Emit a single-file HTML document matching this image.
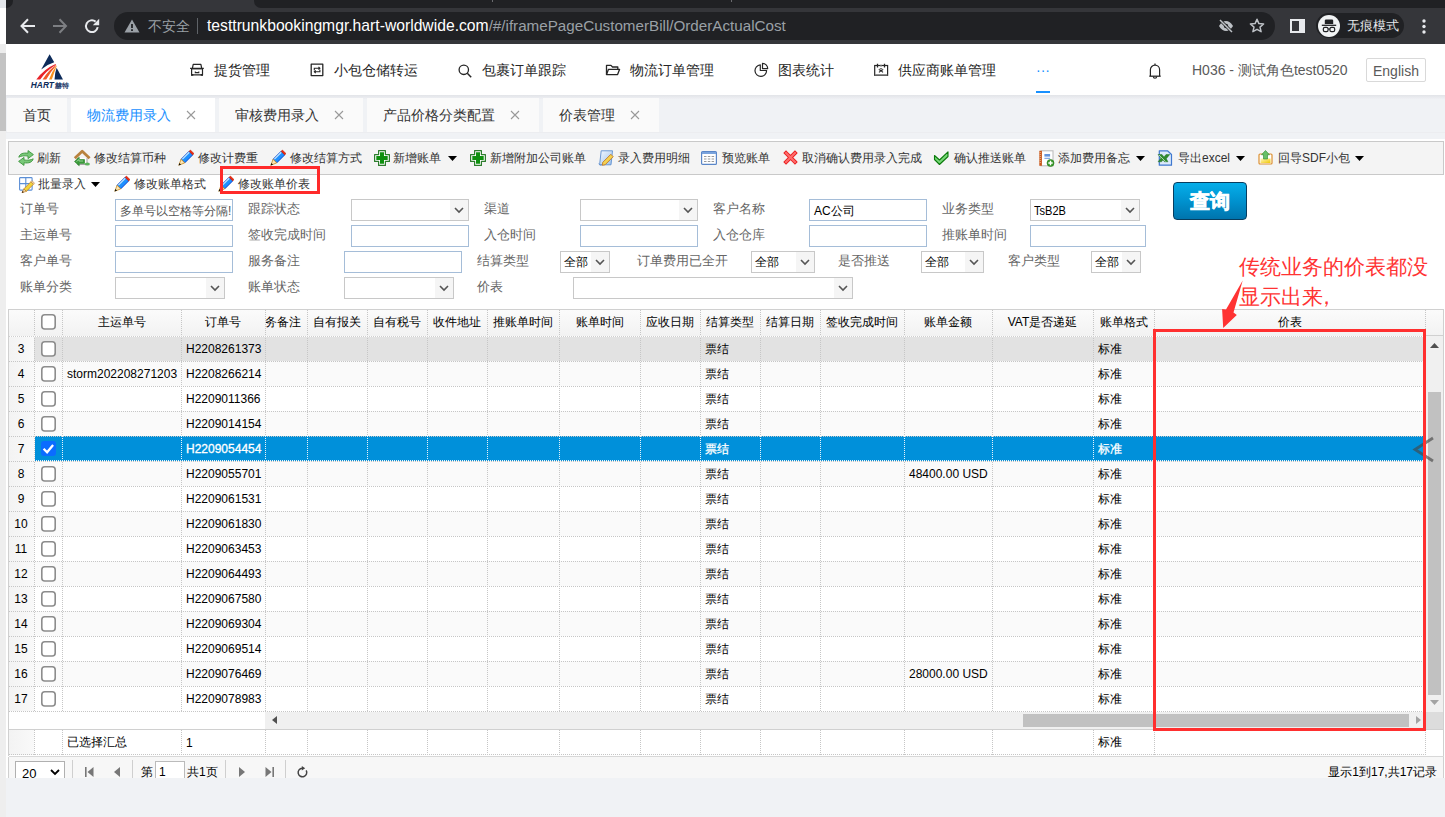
<!DOCTYPE html><html><head><meta charset="utf-8"><style>
*{box-sizing:border-box;margin:0;padding:0}
html,body{width:1445px;height:817px;overflow:hidden;background:#f0f2f5;font-family:"Liberation Sans",sans-serif;position:relative}
.ab{position:absolute}
.t{position:absolute;white-space:nowrap;line-height:1}
svg{position:absolute;overflow:visible}
</style></head><body>
<div class="ab" style="left:0px;top:0px;width:6px;height:8px;background:#e4e7eb"></div>
<div class="ab" style="left:0px;top:8px;width:6px;height:36px;background:#fff"></div>
<div class="ab" style="left:0px;top:44px;width:6px;height:9px;background:#ececec"></div>
<div class="ab" style="left:0px;top:53px;width:6px;height:78px;background:#c3c3c3"></div>
<div class="ab" style="left:0px;top:131px;width:6px;height:686px;background:#eeeeee"></div>
<div class="ab" style="left:6px;top:0px;width:1439px;height:44px;background:#35363a"></div>
<div class="ab" style="left:6px;top:0px;width:7px;height:8px;background:#202124;border-bottom-right-radius:7px"></div>
<div class="ab" style="left:254px;top:0px;width:1191px;height:8px;background:#202124;border-bottom-left-radius:7px"></div>
<div class="ab" style="left:114px;top:12px;width:1161px;height:28px;background:#202124;border-radius:14px"></div>
<div class="ab" style="left:492px;top:0px;width:1px;height:2px;background:#6a6b6f"></div>
<div class="ab" style="left:731px;top:0px;width:1px;height:2px;background:#6a6b6f"></div>
<svg style="left:20px;top:18px" width="16" height="16" viewBox="0 0 16 16"><path d="M15 8H2M8 1.3L1.5 8l6.5 6.7" fill="none" stroke="#e8eaed" stroke-width="2"/></svg>
<svg style="left:53px;top:18px" width="15" height="16" viewBox="0 0 15 16"><path d="M0 8H13M6.5 1.3L13 8l-6.5 6.7" fill="none" stroke="#7d7f83" stroke-width="2"/></svg>
<svg style="left:84px;top:18px" width="16" height="16" viewBox="0 0 16 16"><path d="M11.6 3.6A5.9 5.9 0 1 0 13.7 9.2" fill="none" stroke="#e8eaed" stroke-width="2"/><path d="M8.8 7.2H15.2V0.8z" fill="#e8eaed"/></svg>
<svg style="left:124px;top:19px" width="16" height="14" viewBox="0 0 16 14"><path d="M8 0.5L15.5 13.5H0.5z" fill="#9aa0a6"/><rect x="7.1" y="5" width="1.8" height="4" fill="#202124"/><rect x="7.1" y="10.2" width="1.8" height="1.8" fill="#202124"/></svg>
<div class="t" style="left:148px;top:19px;font-size:14px;color:#9aa0a6;">不安全</div>
<div class="ab" style="left:197px;top:18px;width:1px;height:16px;background:#5f6368"></div>
<div class="t" style="left:207px;top:18px;font-size:15.2px;color:#9aa0a6;"><span style="color:#ffffff;font-size:15.7px">testtrunkbookingmgr.hart-worldwide.com</span>/#/iframePageCustomerBill/OrderActualCost</div>
<svg style="left:1218px;top:19px" width="16" height="14" viewBox="0 0 16 14"><path d="M1 7C3 3.5 5.5 2 8 2s5 1.5 7 5c-2 3.5-4.5 5-7 5S3 10.5 1 7z" fill="#bdc1c6"/><circle cx="8" cy="7" r="2.2" fill="#202124"/><path d="M2 1l12 12" stroke="#202124" stroke-width="3"/><path d="M2 1l12 12" stroke="#bdc1c6" stroke-width="1.5"/></svg>
<svg style="left:1249px;top:18px" width="16" height="16" viewBox="0 0 16 16"><path d="M8 1.3l1.9 4.3 4.7.4-3.6 3.1 1.1 4.6L8 11.3l-4.1 2.4 1.1-4.6L1.4 6l4.7-.4z" fill="none" stroke="#bdc1c6" stroke-width="1.5" stroke-linejoin="round"/></svg>
<svg style="left:1290px;top:19px" width="15" height="14" viewBox="0 0 15 14"><rect x="1" y="1" width="13" height="12" fill="none" stroke="#e8eaed" stroke-width="2"/><rect x="9" y="1" width="5" height="12" fill="#e8eaed"/></svg>
<div class="ab" style="left:1316px;top:13px;width:88px;height:25px;background:#202124;border-radius:12.5px"></div>
<div class="ab" style="left:1318px;top:15px;width:22px;height:22px;border-radius:50%;background:#f1f3f4"></div>
<svg style="left:1318px;top:15px" width="22" height="22" viewBox="0 0 22 22"><path d="M6.8 9V5.8Q6.8 4.6 8 4.6H14Q15.2 4.6 15.2 5.8V9z" fill="#202124"/><path d="M3.8 10.3H18.2" stroke="#202124" stroke-width="1.3"/><rect x="5.3" y="12.3" width="4.8" height="4.3" rx="1.6" fill="none" stroke="#202124" stroke-width="1.2"/><rect x="11.9" y="12.3" width="4.8" height="4.3" rx="1.6" fill="none" stroke="#202124" stroke-width="1.2"/><path d="M10.1 14h1.8" stroke="#202124" stroke-width="1.1"/></svg>
<div class="t" style="left:1347px;top:19px;font-size:13px;color:#e8eaed;">无痕模式</div>
<svg style="left:1422px;top:19px" width="4" height="15" viewBox="0 0 4 15"><circle cx="2" cy="2" r="1.7" fill="#e8eaed"/><circle cx="2" cy="7.5" r="1.7" fill="#e8eaed"/><circle cx="2" cy="13" r="1.7" fill="#e8eaed"/></svg>
<div class="ab" style="left:6px;top:44px;width:1439px;height:51px;background:#fff"></div>
<svg style="left:28px;top:52px" width="44" height="40" viewBox="0 0 44 40">
<path d="M21.6 2.2L13.2 17.5Q19 12.5 26.2 10.3Z" fill="#0d2b5a"/>
<path d="M28.6 15.7L35 27.5H26.5Q26.8 21 28.6 15.7Z" fill="#0d2b5a"/>
<path d="M8.3 27.5Q16 17 27.5 12L28 12.8Q18 19 12.2 27.5Z" fill="#e8242a"/>
<path d="M14.6 27.5Q20 18.5 28 12.9L28.3 13.6Q22.5 20 18.2 27.5Z" fill="#f05a28"/>
<path d="M21 27.5Q23.5 20 28.3 13.7L28.6 14.3Q26 21 23.8 27.5Z" fill="#f7901e"/>
<text x="2.8" y="36.3" font-family="Liberation Sans" font-weight="bold" font-style="italic" font-size="8.4" fill="#0d2b5a">HART</text>
<text x="26.6" y="36.2" font-family="sans-serif" font-weight="bold" font-size="6.8" fill="#1d3b6a">赫特</text>
</svg>
<div class="t" style="left:214px;top:63px;font-size:14px;color:#262626;">提货管理</div>
<div class="t" style="left:334px;top:63px;font-size:14px;color:#262626;">小包仓储转运</div>
<div class="t" style="left:482px;top:63px;font-size:14px;color:#262626;">包裹订单跟踪</div>
<div class="t" style="left:630px;top:63px;font-size:14px;color:#262626;">物流订单管理</div>
<div class="t" style="left:778px;top:63px;font-size:14px;color:#262626;">图表统计</div>
<div class="t" style="left:898px;top:63px;font-size:14px;color:#262626;">供应商账单管理</div>
<svg style="left:189px;top:62px" width="16" height="16" viewBox="0 0 16 16"><rect x="3" y="6.4" width="10" height="1.4" fill="#8a8a8a"/><path d="M3.4 6.4L4.2 2.4H11.9L12.7 6.4M1.1 6.4H14.8M2.6 6.4V12.9H13.5V6.4" fill="none" stroke="#262626" stroke-width="1.2" stroke-linejoin="round"/><path d="M6.3 9.4V10.6H9.8V9.4" fill="none" stroke="#262626" stroke-width="1.1"/><path d="M2 12.9h2.3M11.7 12.9h2.3" stroke="#262626" stroke-width="1.8"/></svg>
<svg style="left:310px;top:63px" width="14" height="14" viewBox="0 0 14 14"><rect x="1.2" y="1.2" width="11.6" height="11.4" fill="none" stroke="#262626" stroke-width="1.3" stroke-linejoin="round"/><path d="M4.3 7.2V5.2H9.6M8.5 3.8L9.9 5.2 8.5 6.6M9.9 6.8V8.8H4.6M5.7 7.4L4.3 8.8 5.7 10.2" fill="none" stroke="#262626" stroke-width="1.1"/></svg>
<svg style="left:605px;top:64px" width="16" height="12" viewBox="0 0 16 12"><path d="M1.5 10.6V1.4H6L7.5 3H12.8V5.3" fill="none" stroke="#262626" stroke-width="1.3" stroke-linejoin="round"/><path d="M1.5 10.6L3.5 5.3H14.6L12.6 10.6Z" fill="none" stroke="#262626" stroke-width="1.3" stroke-linejoin="round"/></svg>
<svg style="left:754px;top:63px" width="15" height="15" viewBox="0 0 15 15"><path d="M6.3 1.8A5.8 5.8 0 1 0 12.6 7.5H6.3z" fill="none" stroke="#262626" stroke-width="1.2" stroke-linejoin="round"/><path d="M8.5 0.3V5.6H13.7A5.3 5.3 0 0 0 8.5 0.3z" fill="none" stroke="#262626" stroke-width="1.2" stroke-linejoin="round"/></svg>
<svg style="left:874px;top:63px" width="14" height="14" viewBox="0 0 14 14"><rect x="0.7" y="2.5" width="12.9" height="9.8" fill="none" stroke="#262626" stroke-width="1.2"/><rect x="1" y="11.2" width="12.3" height="1.3" fill="#888"/><path d="M3.5 0.8V4.6M10.5 0.8V4.6" stroke="#262626" stroke-width="1.3"/><path d="M7 1.5V4" stroke="#999" stroke-width="1.1"/><ellipse cx="7" cy="6.7" rx="1.8" ry="0.9" fill="none" stroke="#262626" stroke-width="1"/><path d="M5 9.3L7 7.6 9 9.3" fill="none" stroke="#262626" stroke-width="1.1"/></svg>
<svg style="left:458px;top:64px" width="14" height="14" viewBox="0 0 14 14"><circle cx="5.8" cy="5.8" r="4.7" fill="none" stroke="#262626" stroke-width="1.3"/><path d="M9.3 9.3l3.9 3.9" stroke="#262626" stroke-width="1.5"/></svg>
<div class="t" style="left:1036px;top:63px;font-size:14px;color:#1890ff;">···</div>
<div class="ab" style="left:1036px;top:91px;width:14px;height:2px;background:#1890ff"></div>
<svg style="left:1149px;top:63px" width="12" height="16" viewBox="0 0 12 16"><path d="M1.4 13V6.8A4.6 4.6 0 0 1 10.6 6.8V13" fill="none" stroke="#262626" stroke-width="1.2"/><path d="M0.3 13.2H11.7" stroke="#262626" stroke-width="1.3"/><path d="M4.3 13.6A1.7 1.7 0 0 0 7.7 13.6" fill="none" stroke="#262626" stroke-width="1.1"/><path d="M6 0.5V2" stroke="#262626" stroke-width="1.2"/></svg>
<div class="t" style="left:1192px;top:63px;font-size:14px;color:#5a5a5a;">H036 - 测试角色test0520</div>
<div class="ab" style="left:1366px;top:58px;width:60px;height:24px;border:1px solid #d9d9d9;border-radius:2px;background:#fff"></div>
<div class="t" style="left:1373px;top:64px;font-size:14px;color:#5a5a5a;">English</div>
<div class="ab" style="left:6px;top:95px;width:1439px;height:4px;background:linear-gradient(#e2e4e8,#eff0f4)"></div>
<div class="ab" style="left:6px;top:132px;width:1439px;height:1px;background:#ecedf0"></div>
<div class="ab" style="left:7px;top:98px;width:60px;height:34px;background:#fafafa"></div>
<div class="t" style="left:23px;top:108px;font-size:14px;color:#333;">首页</div>
<div class="ab" style="left:71px;top:98px;width:144px;height:34px;background:#fff"></div>
<div class="t" style="left:87px;top:108px;font-size:14px;color:#1890ff;">物流费用录入</div>
<svg style="left:186px;top:110px" width="10" height="10" viewBox="0 0 10 10"><path d="M1 1l8 8M9 1l-8 8" stroke="#999" stroke-width="1.1"/></svg>
<div class="ab" style="left:219px;top:98px;width:144px;height:34px;background:#fafafa"></div>
<div class="t" style="left:235px;top:108px;font-size:14px;color:#333;">审核费用录入</div>
<svg style="left:334px;top:110px" width="10" height="10" viewBox="0 0 10 10"><path d="M1 1l8 8M9 1l-8 8" stroke="#999" stroke-width="1.1"/></svg>
<div class="ab" style="left:367px;top:98px;width:172px;height:34px;background:#fafafa"></div>
<div class="t" style="left:383px;top:108px;font-size:14px;color:#333;">产品价格分类配置</div>
<svg style="left:510px;top:110px" width="10" height="10" viewBox="0 0 10 10"><path d="M1 1l8 8M9 1l-8 8" stroke="#999" stroke-width="1.1"/></svg>
<div class="ab" style="left:543px;top:98px;width:116px;height:34px;background:#fafafa"></div>
<div class="t" style="left:559px;top:108px;font-size:14px;color:#333;">价表管理</div>
<svg style="left:630px;top:110px" width="10" height="10" viewBox="0 0 10 10"><path d="M1 1l8 8M9 1l-8 8" stroke="#999" stroke-width="1.1"/></svg>
<div class="ab" style="left:6px;top:139px;width:1439px;height:639px;background:#fff"></div>
<div class="ab" style="left:8px;top:141px;width:1436px;height:34px;background:#f4f4f4;border:1px solid #c9c9c9"></div>
<svg style="left:18px;top:150px" width="16" height="16" viewBox="0 0 16 16"><path d="M0.8 7.2C1.8 3.6 5 2.6 10 3.2V0.6L15.4 4.6 10 8.6V6C6 5.6 3.4 5.8 0.8 7.2z" fill="#78c878" stroke="#3d953d" stroke-width="0.9" stroke-linejoin="round"/><path d="M15.2 8.8C14.2 12.4 11 13.4 6 12.8V15.4L0.6 11.4 6 7.4V10C10 10.4 12.6 10.2 15.2 8.8z" fill="#78c878" stroke="#3d953d" stroke-width="0.9" stroke-linejoin="round"/></svg>
<div class="t" style="left:37px;top:152px;font-size:12px;color:#333;">刷新</div>
<svg style="left:74px;top:150px" width="16" height="16" viewBox="0 0 16 16"><path d="M3.5 8V14.5H13V8" fill="#fff" stroke="#9a9a9a" stroke-width="0.9"/><path d="M0.8 8.2L8.2 1.2 15.6 8.2" fill="none" stroke="#b8823e" stroke-width="2.8" stroke-linejoin="round"/><ellipse cx="13.3" cy="14" rx="2.6" ry="1.5" fill="#5bb35b"/><path d="M0.5 11.5L5.2 7.2V9.6H10.5V13.4H5.2V15.8z" fill="#3c9c3c" stroke="#1e7a1e" stroke-width="0.6"/><path d="M2.5 11.5L5 9.5V11H9" fill="none" stroke="#a9dca9" stroke-width="0.8"/></svg>
<div class="t" style="left:94px;top:152px;font-size:12px;color:#333;">修改结算币种</div>
<svg style="left:178px;top:150px" width="16" height="16" viewBox="0 0 16 16"><path d="M3.1 9.3L11.1 1.3 14.7 4.9 6.7 12.9z" fill="#1e90ff" stroke="#0a3cc8" stroke-width="0.9" stroke-linejoin="round"/><path d="M4.4 9.1L11.3 2.2" stroke="#bfe6ff" stroke-width="1.3"/><path d="M11.1 1.3L12.4 0 16 3.6 14.7 4.9z" fill="#ee2a10" stroke="#b81a00" stroke-width="0.5"/><path d="M3.1 9.3L6.7 12.9 0.8 15.2z" fill="#fbe7b8" stroke="#c88a1a" stroke-width="0.8" stroke-linejoin="round"/><path d="M0.6 15.4L1.4 12.9 3.1 14.6z" fill="#111"/></svg>
<div class="t" style="left:198px;top:152px;font-size:12px;color:#333;">修改计费重</div>
<svg style="left:270px;top:150px" width="16" height="16" viewBox="0 0 16 16"><path d="M3.1 9.3L11.1 1.3 14.7 4.9 6.7 12.9z" fill="#1e90ff" stroke="#0a3cc8" stroke-width="0.9" stroke-linejoin="round"/><path d="M4.4 9.1L11.3 2.2" stroke="#bfe6ff" stroke-width="1.3"/><path d="M11.1 1.3L12.4 0 16 3.6 14.7 4.9z" fill="#ee2a10" stroke="#b81a00" stroke-width="0.5"/><path d="M3.1 9.3L6.7 12.9 0.8 15.2z" fill="#fbe7b8" stroke="#c88a1a" stroke-width="0.8" stroke-linejoin="round"/><path d="M0.6 15.4L1.4 12.9 3.1 14.6z" fill="#111"/></svg>
<div class="t" style="left:290px;top:152px;font-size:12px;color:#333;">修改结算方式</div>
<svg style="left:374px;top:150px" width="16" height="16" viewBox="0 0 16 16"><path d="M4.6 0.6h6.8v4h4v6.8h-4v4H4.6v-4h-4V4.6h4z" fill="#fff" stroke="#2d7d2d" stroke-width="1.2" stroke-linejoin="round"/><path d="M6 2.3h4v3.7h3.7v4H10v3.7H6V10H2.3V6H6z" fill="#0e900e"/></svg>
<div class="t" style="left:393px;top:152px;font-size:12px;color:#333;">新增账单</div>
<svg style="left:448px;top:156px" width="9" height="5" viewBox="0 0 9 5"><path d="M0 0h9L4.5 5z" fill="#000"/></svg>
<svg style="left:470px;top:150px" width="16" height="16" viewBox="0 0 16 16"><path d="M4.6 0.6h6.8v4h4v6.8h-4v4H4.6v-4h-4V4.6h4z" fill="#fff" stroke="#2d7d2d" stroke-width="1.2" stroke-linejoin="round"/><path d="M6 2.3h4v3.7h3.7v4H10v3.7H6V10H2.3V6H6z" fill="#0e900e"/></svg>
<div class="t" style="left:490px;top:152px;font-size:12px;color:#333;">新增附加公司账单</div>
<svg style="left:598px;top:150px" width="16" height="16" viewBox="0 0 16 16"><defs><linearGradient id="gdoc" x1="0" y1="0" x2="1" y2="1"><stop offset="0" stop-color="#f4f9ff"/><stop offset="1" stop-color="#9cc0ea"/></linearGradient></defs><path d="M3.2 0.8H14.5L13 14.8H1.6z" fill="url(#gdoc)" stroke="#5d8fcf" stroke-width="0.9" stroke-linejoin="round"/><path d="M0.8 13.5c0.5 1.6 1.8 1.8 3 1.3" fill="none" stroke="#5d8fcf" stroke-width="0.9"/><path d="M4.8 12.3L12.8 4.3 15.2 6.7 7.2 14.7 4.3 15.3z" fill="#f5d250" stroke="#c07a2a" stroke-width="0.9" stroke-linejoin="round"/></svg>
<div class="t" style="left:618px;top:152px;font-size:12px;color:#333;">录入费用明细</div>
<svg style="left:701px;top:151px" width="16" height="14" viewBox="0 0 16 14"><rect x="0.6" y="0.6" width="14.8" height="12.8" rx="1" fill="#fff" stroke="#5a86c8" stroke-width="1.2"/><rect x="1" y="1" width="14" height="2" fill="#7aa3dc"/><path d="M3 5.5h2.5M6.8 5.5h2.5M10.6 5.5h2.5M3 8h2.5M6.8 8h2.5M10.6 8h2.5M3 10.5h2.5M6.8 10.5h2.5M10.6 10.5h2.5" stroke="#9a9a9a" stroke-width="1"/></svg>
<div class="t" style="left:722px;top:152px;font-size:12px;color:#333;">预览账单</div>
<svg style="left:784px;top:151px" width="13" height="13" viewBox="0 0 14 14"><path d="M2.2 2.2l9.6 9.6M11.8 2.2l-9.6 9.6" stroke="#e81c1c" stroke-width="4.2" stroke-linecap="square"/><path d="M2.2 2.2l9.6 9.6M11.8 2.2l-9.6 9.6" stroke="#ff6b6b" stroke-width="2.4" stroke-linecap="square"/></svg>
<div class="t" style="left:802px;top:152px;font-size:12px;color:#333;">取消确认费用录入完成</div>
<svg style="left:934px;top:151px" width="16" height="14" viewBox="0 0 16 14"><path d="M0.5 4.5L5.5 9 14 0.8V5.5L5.5 13.5 0.5 8.5z" fill="#78d878" stroke="#0a7a0a" stroke-width="1.1" stroke-linejoin="round"/></svg>
<div class="t" style="left:954px;top:152px;font-size:12px;color:#333;">确认推送账单</div>
<svg style="left:1039px;top:150px" width="16" height="17" viewBox="0 0 16 17"><rect x="2" y="0.8" width="12" height="15" fill="#fff" stroke="#bdbdbd" stroke-width="1.1"/><path d="M1.6 0.8V15.8" stroke="#c9571a" stroke-width="2.6"/><path d="M0.5 2.5h1.5M0.5 4.5h1.5M0.5 6.5h1.5M0.5 8.5h1.5M0.5 10.5h1.5M0.5 12.5h1.5" stroke="#e8b48a" stroke-width="0.8"/><rect x="5.4" y="4" width="5.7" height="2.6" fill="#6595dc"/><rect x="5.4" y="7.8" width="5.7" height="1" fill="#6595dc"/><circle cx="11.5" cy="13" r="3.5" fill="#3a9a2a" stroke="#237a1a" stroke-width="0.6"/><path d="M11.5 10.8v4.4M9.3 13h4.4" stroke="#fff" stroke-width="1.4"/></svg>
<div class="t" style="left:1058px;top:152px;font-size:12px;color:#333;">添加费用备忘</div>
<svg style="left:1136px;top:156px" width="9" height="5" viewBox="0 0 9 5"><path d="M0 0h9L4.5 5z" fill="#000"/></svg>
<svg style="left:1157px;top:150px" width="16" height="16" viewBox="0 0 16 16"><path d="M2.3 0.8H10.5L14.5 4.5V15.2H2.3z" fill="#dbe9fb" stroke="#3f78d0" stroke-width="1.2" stroke-linejoin="round"/><path d="M1 4.5h4l2 2.5 2-2.5h3.8L9.3 8.8 11 11.8H7.5L6 10 4.5 11.8H1L4 8z" fill="#2f8a2f" stroke="#1d6a1d" stroke-width="0.4"/><path d="M2 5L8.5 11.5" stroke="#c8f0c8" stroke-width="0.8"/></svg>
<div class="t" style="left:1178px;top:152px;font-size:12px;color:#333;">导出excel</div>
<svg style="left:1236px;top:156px" width="9" height="5" viewBox="0 0 9 5"><path d="M0 0h9L4.5 5z" fill="#000"/></svg>
<svg style="left:1258px;top:150px" width="15" height="15" viewBox="0 0 15 15"><defs><linearGradient id="gup" x1="0" y1="0" x2="1" y2="1"><stop offset="0" stop-color="#fff5c0"/><stop offset="1" stop-color="#f0c800"/></linearGradient></defs><rect x="1" y="4" width="13" height="10" rx="1" fill="#fff" stroke="#dc9030" stroke-width="1.2"/><rect x="2.5" y="8.5" width="10" height="4.5" fill="url(#gup)"/><path d="M7.5 0.5L11.5 4.8H9.5V9H5.5V4.8H3.5z" fill="#68c068" stroke="#2e8a2e" stroke-width="0.6"/></svg>
<div class="t" style="left:1278px;top:152px;font-size:12px;color:#333;">回导SDF小包</div>
<svg style="left:1355px;top:156px" width="9" height="5" viewBox="0 0 9 5"><path d="M0 0h9L4.5 5z" fill="#000"/></svg>
<svg style="left:19px;top:177px" width="16" height="16" viewBox="0 0 16 16"><rect x="0.6" y="0.6" width="12.5" height="12.5" rx="0.8" fill="#fff" stroke="#5b8fd6" stroke-width="1.1"/><path d="M6.8 1v11.5M1 6.6h11.5" stroke="#5b8fd6" stroke-width="1.1"/><path d="M4.8 11.9L11.9 4.8 14.4 7.3 7.3 14.4z" fill="#f3d43a" stroke="#c07e22" stroke-width="0.8" stroke-linejoin="round"/><path d="M12 4.7l1-1 2.5 2.5-1 1z" fill="#f8e0c0" stroke="#c07e22" stroke-width="0.6"/><path d="M4.8 11.9L7.3 14.4 3 15.7z" fill="#f5d8a8" stroke="#b5751c" stroke-width="0.6" stroke-linejoin="round"/><path d="M2.8 15.9L3.5 13.8 4.9 15.2z" fill="#4a2a0a"/></svg>
<div class="t" style="left:38px;top:178px;font-size:12px;color:#333;">批量录入</div>
<svg style="left:91px;top:182px" width="9" height="5" viewBox="0 0 9 5"><path d="M0 0h9L4.5 5z" fill="#000"/></svg>
<svg style="left:114px;top:176px" width="16" height="16" viewBox="0 0 16 16"><path d="M3.1 9.3L11.1 1.3 14.7 4.9 6.7 12.9z" fill="#1e90ff" stroke="#0a3cc8" stroke-width="0.9" stroke-linejoin="round"/><path d="M4.4 9.1L11.3 2.2" stroke="#bfe6ff" stroke-width="1.3"/><path d="M11.1 1.3L12.4 0 16 3.6 14.7 4.9z" fill="#ee2a10" stroke="#b81a00" stroke-width="0.5"/><path d="M3.1 9.3L6.7 12.9 0.8 15.2z" fill="#fbe7b8" stroke="#c88a1a" stroke-width="0.8" stroke-linejoin="round"/><path d="M0.6 15.4L1.4 12.9 3.1 14.6z" fill="#111"/></svg>
<div class="t" style="left:134px;top:178px;font-size:12px;color:#333;">修改账单格式</div>
<svg style="left:218px;top:176px" width="16" height="16" viewBox="0 0 16 16"><path d="M3.1 9.3L11.1 1.3 14.7 4.9 6.7 12.9z" fill="#1e90ff" stroke="#0a3cc8" stroke-width="0.9" stroke-linejoin="round"/><path d="M4.4 9.1L11.3 2.2" stroke="#bfe6ff" stroke-width="1.3"/><path d="M11.1 1.3L12.4 0 16 3.6 14.7 4.9z" fill="#ee2a10" stroke="#b81a00" stroke-width="0.5"/><path d="M3.1 9.3L6.7 12.9 0.8 15.2z" fill="#fbe7b8" stroke="#c88a1a" stroke-width="0.8" stroke-linejoin="round"/><path d="M0.6 15.4L1.4 12.9 3.1 14.6z" fill="#111"/></svg>
<div class="t" style="left:238px;top:178px;font-size:12px;color:#333;">修改账单价表</div>
<div class="t" style="left:20px;top:202px;font-size:13px;color:#666;">订单号</div>
<div class="ab" style="left:115px;top:199px;width:118px;height:22px;border:1px solid #a5bdd8;background:#fff;overflow:hidden"><div class="t" style="left:4px;top:5px;font-size:12px;color:#555">多单号以空格等分隔!</div></div>
<div class="t" style="left:248px;top:202px;font-size:13px;color:#666;">跟踪状态</div>
<div class="ab" style="left:351px;top:199px;width:118px;height:22px;border:1px solid #c8c8c8;background:#fff;overflow:hidden"><div class="t" style="left:3px;top:4px;font-size:12px;color:#000;"></div><div class="ab" style="right:0;top:0;width:18px;height:20px;background:#f5f5f5"></div><svg style="right:4px;top:7px" width="10" height="6" viewBox="0 0 10 6"><path d="M1 1l4 4 4-4" fill="none" stroke="#555" stroke-width="1.6"/></svg></div>
<div class="t" style="left:484px;top:202px;font-size:13px;color:#666;">渠道</div>
<div class="ab" style="left:580px;top:199px;width:118px;height:22px;border:1px solid #c8c8c8;background:#fff;overflow:hidden"><div class="t" style="left:3px;top:4px;font-size:12px;color:#000;"></div><div class="ab" style="right:0;top:0;width:18px;height:20px;background:#f5f5f5"></div><svg style="right:4px;top:7px" width="10" height="6" viewBox="0 0 10 6"><path d="M1 1l4 4 4-4" fill="none" stroke="#555" stroke-width="1.6"/></svg></div>
<div class="t" style="left:713px;top:202px;font-size:13px;color:#666;">客户名称</div>
<div class="ab" style="left:809px;top:199px;width:118px;height:22px;border:1px solid #a5bdd8;background:#fff;overflow:hidden"><div class="t" style="left:4px;top:5px;font-size:12px;color:#000">AC公司</div></div>
<div class="t" style="left:942px;top:202px;font-size:13px;color:#666;">业务类型</div>
<div class="ab" style="left:1030px;top:199px;width:110px;height:22px;border:1px solid #c8c8c8;background:#fff;overflow:hidden"><div class="t" style="left:3px;top:4.5px;font-size:12px;color:#000;transform:scaleX(0.92);transform-origin:0 0">TsB2B</div><div class="ab" style="right:0;top:0;width:18px;height:20px;background:#f5f5f5"></div><svg style="right:4px;top:7px" width="10" height="6" viewBox="0 0 10 6"><path d="M1 1l4 4 4-4" fill="none" stroke="#555" stroke-width="1.6"/></svg></div>
<div class="t" style="left:20px;top:228px;font-size:13px;color:#666;">主运单号</div>
<div class="ab" style="left:115px;top:225px;width:118px;height:22px;border:1px solid #a5bdd8;background:#fff;overflow:hidden"><div class="t" style="left:4px;top:5px;font-size:13px;color:#000"></div></div>
<div class="t" style="left:248px;top:228px;font-size:13px;color:#666;">签收完成时间</div>
<div class="ab" style="left:351px;top:225px;width:118px;height:22px;border:1px solid #a5bdd8;background:#fff;overflow:hidden"><div class="t" style="left:4px;top:5px;font-size:13px;color:#000"></div></div>
<div class="t" style="left:484px;top:228px;font-size:13px;color:#666;">入仓时间</div>
<div class="ab" style="left:580px;top:225px;width:118px;height:22px;border:1px solid #a5bdd8;background:#fff;overflow:hidden"><div class="t" style="left:4px;top:5px;font-size:13px;color:#000"></div></div>
<div class="t" style="left:713px;top:228px;font-size:13px;color:#666;">入仓仓库</div>
<div class="ab" style="left:809px;top:225px;width:118px;height:22px;border:1px solid #a5bdd8;background:#fff;overflow:hidden"><div class="t" style="left:4px;top:5px;font-size:13px;color:#000"></div></div>
<div class="t" style="left:942px;top:228px;font-size:13px;color:#666;">推账单时间</div>
<div class="ab" style="left:1030px;top:225px;width:116px;height:22px;border:1px solid #a5bdd8;background:#fff;overflow:hidden"><div class="t" style="left:4px;top:5px;font-size:13px;color:#000"></div></div>
<div class="t" style="left:20px;top:254px;font-size:13px;color:#666;">客户单号</div>
<div class="ab" style="left:115px;top:251px;width:118px;height:22px;border:1px solid #a5bdd8;background:#fff;overflow:hidden"><div class="t" style="left:4px;top:5px;font-size:13px;color:#000"></div></div>
<div class="t" style="left:248px;top:254px;font-size:13px;color:#666;">服务备注</div>
<div class="ab" style="left:344px;top:251px;width:118px;height:22px;border:1px solid #a5bdd8;background:#fff;overflow:hidden"><div class="t" style="left:4px;top:5px;font-size:13px;color:#000"></div></div>
<div class="t" style="left:477px;top:254px;font-size:13px;color:#666;">结算类型</div>
<div class="ab" style="left:560px;top:251px;width:50px;height:22px;border:1px solid #c8c8c8;background:#fff;overflow:hidden"><div class="t" style="left:3px;top:4px;font-size:12px;color:#000;">全部</div><div class="ab" style="right:0;top:0;width:18px;height:20px;background:#f5f5f5"></div><svg style="right:4px;top:7px" width="10" height="6" viewBox="0 0 10 6"><path d="M1 1l4 4 4-4" fill="none" stroke="#555" stroke-width="1.6"/></svg></div>
<div class="t" style="left:637px;top:254px;font-size:13px;color:#666;">订单费用已全开</div>
<div class="ab" style="left:751px;top:251px;width:64px;height:22px;border:1px solid #c8c8c8;background:#fff;overflow:hidden"><div class="t" style="left:3px;top:4px;font-size:12px;color:#000;">全部</div><div class="ab" style="right:0;top:0;width:18px;height:20px;background:#f5f5f5"></div><svg style="right:4px;top:7px" width="10" height="6" viewBox="0 0 10 6"><path d="M1 1l4 4 4-4" fill="none" stroke="#555" stroke-width="1.6"/></svg></div>
<div class="t" style="left:838px;top:254px;font-size:13px;color:#666;">是否推送</div>
<div class="ab" style="left:921px;top:251px;width:63px;height:22px;border:1px solid #c8c8c8;background:#fff;overflow:hidden"><div class="t" style="left:3px;top:4px;font-size:12px;color:#000;">全部</div><div class="ab" style="right:0;top:0;width:18px;height:20px;background:#f5f5f5"></div><svg style="right:4px;top:7px" width="10" height="6" viewBox="0 0 10 6"><path d="M1 1l4 4 4-4" fill="none" stroke="#555" stroke-width="1.6"/></svg></div>
<div class="t" style="left:1008px;top:254px;font-size:13px;color:#666;">客户类型</div>
<div class="ab" style="left:1091px;top:251px;width:50px;height:22px;border:1px solid #c8c8c8;background:#fff;overflow:hidden"><div class="t" style="left:3px;top:4px;font-size:12px;color:#000;">全部</div><div class="ab" style="right:0;top:0;width:18px;height:20px;background:#f5f5f5"></div><svg style="right:4px;top:7px" width="10" height="6" viewBox="0 0 10 6"><path d="M1 1l4 4 4-4" fill="none" stroke="#555" stroke-width="1.6"/></svg></div>
<div class="t" style="left:20px;top:280px;font-size:13px;color:#666;">账单分类</div>
<div class="ab" style="left:115px;top:277px;width:110px;height:22px;border:1px solid #c8c8c8;background:#fff;overflow:hidden"><div class="t" style="left:3px;top:4px;font-size:12px;color:#000;"></div><div class="ab" style="right:0;top:0;width:18px;height:20px;background:#f5f5f5"></div><svg style="right:4px;top:7px" width="10" height="6" viewBox="0 0 10 6"><path d="M1 1l4 4 4-4" fill="none" stroke="#555" stroke-width="1.6"/></svg></div>
<div class="t" style="left:248px;top:280px;font-size:13px;color:#666;">账单状态</div>
<div class="ab" style="left:344px;top:277px;width:110px;height:22px;border:1px solid #c8c8c8;background:#fff;overflow:hidden"><div class="t" style="left:3px;top:4px;font-size:12px;color:#000;"></div><div class="ab" style="right:0;top:0;width:18px;height:20px;background:#f5f5f5"></div><svg style="right:4px;top:7px" width="10" height="6" viewBox="0 0 10 6"><path d="M1 1l4 4 4-4" fill="none" stroke="#555" stroke-width="1.6"/></svg></div>
<div class="t" style="left:477px;top:280px;font-size:13px;color:#666;">价表</div>
<div class="ab" style="left:573px;top:277px;width:280px;height:22px;border:1px solid #c8c8c8;background:#fff;overflow:hidden"><div class="t" style="left:3px;top:4px;font-size:12px;color:#000;"></div><div class="ab" style="right:0;top:0;width:18px;height:20px;background:#f5f5f5"></div><svg style="right:4px;top:7px" width="10" height="6" viewBox="0 0 10 6"><path d="M1 1l4 4 4-4" fill="none" stroke="#555" stroke-width="1.6"/></svg></div>
<div class="ab" style="left:1173px;top:182px;width:74px;height:38px;border-radius:4px;border:1px solid #073d5f;background:linear-gradient(#05aeea,#0092cf 50%,#0074ad)"></div>
<div class="t" style="left:1190px;top:191px;font-size:20px;color:#fff;font-weight:bold;-webkit-text-stroke:0.7px #fff">查询</div>
<div class="ab" style="left:8px;top:309px;width:1436px;height:447px;border:1px solid #d0d0d0;border-bottom:none;background:#fff"></div>
<div class="ab" style="left:9px;top:310px;width:1417px;height:26px;background:linear-gradient(#fbfbfb,#f2f2f2)"></div>
<div class="ab" style="left:1426px;top:310px;width:17px;height:26px;background:linear-gradient(#fbfbfb,#f2f2f2)"></div>
<div class="ab" style="left:1426px;top:335px;width:17px;height:1px;background:#d0d0d0"></div>
<div class="ab" style="left:34px;top:336px;width:1391px;height:25px;background:#e2e2e2"></div>
<div class="ab" style="left:9px;top:336px;width:25px;height:25px;background:linear-gradient(to right,#f3f3f3,#f9f9f9)"></div>
<div class="ab" style="left:34px;top:361px;width:1391px;height:25px;background:#fafafa"></div>
<div class="ab" style="left:9px;top:361px;width:25px;height:25px;background:linear-gradient(to right,#f3f3f3,#f9f9f9)"></div>
<div class="ab" style="left:34px;top:386px;width:1391px;height:25px;background:#fff"></div>
<div class="ab" style="left:9px;top:386px;width:25px;height:25px;background:linear-gradient(to right,#f3f3f3,#f9f9f9)"></div>
<div class="ab" style="left:34px;top:411px;width:1391px;height:25px;background:#fafafa"></div>
<div class="ab" style="left:9px;top:411px;width:25px;height:25px;background:linear-gradient(to right,#f3f3f3,#f9f9f9)"></div>
<div class="ab" style="left:35px;top:436px;width:1390px;height:25px;background:#0090da"></div>
<div class="ab" style="left:9px;top:436px;width:25px;height:25px;background:linear-gradient(to right,#f3f3f3,#f9f9f9)"></div>
<div class="ab" style="left:34px;top:461px;width:1391px;height:25px;background:#fafafa"></div>
<div class="ab" style="left:9px;top:461px;width:25px;height:25px;background:linear-gradient(to right,#f3f3f3,#f9f9f9)"></div>
<div class="ab" style="left:34px;top:486px;width:1391px;height:25px;background:#fff"></div>
<div class="ab" style="left:9px;top:486px;width:25px;height:25px;background:linear-gradient(to right,#f3f3f3,#f9f9f9)"></div>
<div class="ab" style="left:34px;top:511px;width:1391px;height:25px;background:#fafafa"></div>
<div class="ab" style="left:9px;top:511px;width:25px;height:25px;background:linear-gradient(to right,#f3f3f3,#f9f9f9)"></div>
<div class="ab" style="left:34px;top:536px;width:1391px;height:25px;background:#fff"></div>
<div class="ab" style="left:9px;top:536px;width:25px;height:25px;background:linear-gradient(to right,#f3f3f3,#f9f9f9)"></div>
<div class="ab" style="left:34px;top:561px;width:1391px;height:25px;background:#fafafa"></div>
<div class="ab" style="left:9px;top:561px;width:25px;height:25px;background:linear-gradient(to right,#f3f3f3,#f9f9f9)"></div>
<div class="ab" style="left:34px;top:586px;width:1391px;height:25px;background:#fff"></div>
<div class="ab" style="left:9px;top:586px;width:25px;height:25px;background:linear-gradient(to right,#f3f3f3,#f9f9f9)"></div>
<div class="ab" style="left:34px;top:611px;width:1391px;height:25px;background:#fafafa"></div>
<div class="ab" style="left:9px;top:611px;width:25px;height:25px;background:linear-gradient(to right,#f3f3f3,#f9f9f9)"></div>
<div class="ab" style="left:34px;top:636px;width:1391px;height:25px;background:#fff"></div>
<div class="ab" style="left:9px;top:636px;width:25px;height:25px;background:linear-gradient(to right,#f3f3f3,#f9f9f9)"></div>
<div class="ab" style="left:34px;top:661px;width:1391px;height:25px;background:#fafafa"></div>
<div class="ab" style="left:9px;top:661px;width:25px;height:25px;background:linear-gradient(to right,#f3f3f3,#f9f9f9)"></div>
<div class="ab" style="left:34px;top:686px;width:1391px;height:25px;background:#fff"></div>
<div class="ab" style="left:9px;top:686px;width:25px;height:25px;background:linear-gradient(to right,#f3f3f3,#f9f9f9)"></div>
<div class="ab" style="left:9px;top:730px;width:25px;height:25px;background:linear-gradient(to right,#f3f3f3,#f9f9f9)"></div>
<div class="t" style="left:62px;top:316px;width:119px;text-align:center;font-size:12px;color:#000">主运单号</div>
<div class="t" style="left:181px;top:316px;width:84px;text-align:center;font-size:12px;color:#000">订单号</div>
<div class="t" style="left:265px;top:316px;font-size:12px;color:#000;">务备注</div>
<div class="t" style="left:307px;top:316px;width:60px;text-align:center;font-size:12px;color:#000">自有报关</div>
<div class="t" style="left:367px;top:316px;width:60px;text-align:center;font-size:12px;color:#000">自有税号</div>
<div class="t" style="left:427px;top:316px;width:60px;text-align:center;font-size:12px;color:#000">收件地址</div>
<div class="t" style="left:487px;top:316px;width:72px;text-align:center;font-size:12px;color:#000">推账单时间</div>
<div class="t" style="left:559px;top:316px;width:81px;text-align:center;font-size:12px;color:#000">账单时间</div>
<div class="t" style="left:640px;top:316px;width:60px;text-align:center;font-size:12px;color:#000">应收日期</div>
<div class="t" style="left:700px;top:316px;width:60px;text-align:center;font-size:12px;color:#000">结算类型</div>
<div class="t" style="left:760px;top:316px;width:60px;text-align:center;font-size:12px;color:#000">结算日期</div>
<div class="t" style="left:820px;top:316px;width:84px;text-align:center;font-size:12px;color:#000">签收完成时间</div>
<div class="t" style="left:904px;top:316px;width:88px;text-align:center;font-size:12px;color:#000">账单金额</div>
<div class="t" style="left:992px;top:316px;width:101px;text-align:center;font-size:12px;color:#000">VAT是否递延</div>
<div class="t" style="left:1093px;top:316px;width:61px;text-align:center;font-size:12px;color:#000">账单格式</div>
<div class="t" style="left:1154px;top:316px;width:271px;text-align:center;font-size:12px;color:#000">价表</div>
<svg style="left:41px;top:314px" width="15" height="16" viewBox="0 0 15 16"><rect x="0.8" y="0.8" width="13.4" height="14.2" rx="3" fill="#fff" stroke="#8c8c8c" stroke-width="1.6"/></svg>
<div class="ab" style="left:34px;top:310px;width:1px;height:401px;background:repeating-linear-gradient(to bottom,#c6c6c6 0 1px,transparent 1px 2px)"></div>
<div class="ab" style="left:34px;top:730px;width:1px;height:25px;background:repeating-linear-gradient(to bottom,#c6c6c6 0 1px,transparent 1px 2px)"></div>
<div class="ab" style="left:62px;top:310px;width:1px;height:401px;background:repeating-linear-gradient(to bottom,#c6c6c6 0 1px,transparent 1px 2px)"></div>
<div class="ab" style="left:62px;top:730px;width:1px;height:25px;background:repeating-linear-gradient(to bottom,#c6c6c6 0 1px,transparent 1px 2px)"></div>
<div class="ab" style="left:181px;top:310px;width:1px;height:401px;background:repeating-linear-gradient(to bottom,#c6c6c6 0 1px,transparent 1px 2px)"></div>
<div class="ab" style="left:181px;top:730px;width:1px;height:25px;background:repeating-linear-gradient(to bottom,#c6c6c6 0 1px,transparent 1px 2px)"></div>
<div class="ab" style="left:265px;top:310px;width:1px;height:401px;background:repeating-linear-gradient(to bottom,#c6c6c6 0 1px,transparent 1px 2px)"></div>
<div class="ab" style="left:265px;top:730px;width:1px;height:25px;background:repeating-linear-gradient(to bottom,#c6c6c6 0 1px,transparent 1px 2px)"></div>
<div class="ab" style="left:307px;top:310px;width:1px;height:401px;background:repeating-linear-gradient(to bottom,#c6c6c6 0 1px,transparent 1px 2px)"></div>
<div class="ab" style="left:307px;top:730px;width:1px;height:25px;background:repeating-linear-gradient(to bottom,#c6c6c6 0 1px,transparent 1px 2px)"></div>
<div class="ab" style="left:367px;top:310px;width:1px;height:401px;background:repeating-linear-gradient(to bottom,#c6c6c6 0 1px,transparent 1px 2px)"></div>
<div class="ab" style="left:367px;top:730px;width:1px;height:25px;background:repeating-linear-gradient(to bottom,#c6c6c6 0 1px,transparent 1px 2px)"></div>
<div class="ab" style="left:427px;top:310px;width:1px;height:401px;background:repeating-linear-gradient(to bottom,#c6c6c6 0 1px,transparent 1px 2px)"></div>
<div class="ab" style="left:427px;top:730px;width:1px;height:25px;background:repeating-linear-gradient(to bottom,#c6c6c6 0 1px,transparent 1px 2px)"></div>
<div class="ab" style="left:487px;top:310px;width:1px;height:401px;background:repeating-linear-gradient(to bottom,#c6c6c6 0 1px,transparent 1px 2px)"></div>
<div class="ab" style="left:487px;top:730px;width:1px;height:25px;background:repeating-linear-gradient(to bottom,#c6c6c6 0 1px,transparent 1px 2px)"></div>
<div class="ab" style="left:559px;top:310px;width:1px;height:401px;background:repeating-linear-gradient(to bottom,#c6c6c6 0 1px,transparent 1px 2px)"></div>
<div class="ab" style="left:559px;top:730px;width:1px;height:25px;background:repeating-linear-gradient(to bottom,#c6c6c6 0 1px,transparent 1px 2px)"></div>
<div class="ab" style="left:640px;top:310px;width:1px;height:401px;background:repeating-linear-gradient(to bottom,#c6c6c6 0 1px,transparent 1px 2px)"></div>
<div class="ab" style="left:640px;top:730px;width:1px;height:25px;background:repeating-linear-gradient(to bottom,#c6c6c6 0 1px,transparent 1px 2px)"></div>
<div class="ab" style="left:700px;top:310px;width:1px;height:401px;background:repeating-linear-gradient(to bottom,#c6c6c6 0 1px,transparent 1px 2px)"></div>
<div class="ab" style="left:700px;top:730px;width:1px;height:25px;background:repeating-linear-gradient(to bottom,#c6c6c6 0 1px,transparent 1px 2px)"></div>
<div class="ab" style="left:760px;top:310px;width:1px;height:401px;background:repeating-linear-gradient(to bottom,#c6c6c6 0 1px,transparent 1px 2px)"></div>
<div class="ab" style="left:760px;top:730px;width:1px;height:25px;background:repeating-linear-gradient(to bottom,#c6c6c6 0 1px,transparent 1px 2px)"></div>
<div class="ab" style="left:820px;top:310px;width:1px;height:401px;background:repeating-linear-gradient(to bottom,#c6c6c6 0 1px,transparent 1px 2px)"></div>
<div class="ab" style="left:820px;top:730px;width:1px;height:25px;background:repeating-linear-gradient(to bottom,#c6c6c6 0 1px,transparent 1px 2px)"></div>
<div class="ab" style="left:904px;top:310px;width:1px;height:401px;background:repeating-linear-gradient(to bottom,#c6c6c6 0 1px,transparent 1px 2px)"></div>
<div class="ab" style="left:904px;top:730px;width:1px;height:25px;background:repeating-linear-gradient(to bottom,#c6c6c6 0 1px,transparent 1px 2px)"></div>
<div class="ab" style="left:992px;top:310px;width:1px;height:401px;background:repeating-linear-gradient(to bottom,#c6c6c6 0 1px,transparent 1px 2px)"></div>
<div class="ab" style="left:992px;top:730px;width:1px;height:25px;background:repeating-linear-gradient(to bottom,#c6c6c6 0 1px,transparent 1px 2px)"></div>
<div class="ab" style="left:1093px;top:310px;width:1px;height:401px;background:repeating-linear-gradient(to bottom,#c6c6c6 0 1px,transparent 1px 2px)"></div>
<div class="ab" style="left:1093px;top:730px;width:1px;height:25px;background:repeating-linear-gradient(to bottom,#c6c6c6 0 1px,transparent 1px 2px)"></div>
<div class="ab" style="left:1154px;top:310px;width:1px;height:401px;background:repeating-linear-gradient(to bottom,#c6c6c6 0 1px,transparent 1px 2px)"></div>
<div class="ab" style="left:1154px;top:730px;width:1px;height:25px;background:repeating-linear-gradient(to bottom,#c6c6c6 0 1px,transparent 1px 2px)"></div>
<div class="ab" style="left:1425px;top:310px;width:1px;height:26px;background:repeating-linear-gradient(to bottom,#c6c6c6 0 1px,transparent 1px 2px)"></div>
<div class="ab" style="left:1425px;top:730px;width:1px;height:25px;background:repeating-linear-gradient(to bottom,#c6c6c6 0 1px,transparent 1px 2px)"></div>
<div class="ab" style="left:9px;top:336px;width:1417px;height:1px;background:repeating-linear-gradient(to right,#d0d0d0 0 1px,#fff 1px 2px)"></div>
<div class="ab" style="left:9px;top:361px;width:1417px;height:1px;background:repeating-linear-gradient(to right,#c6c6c6 0 1px,transparent 1px 2px)"></div>
<div class="ab" style="left:9px;top:386px;width:1417px;height:1px;background:repeating-linear-gradient(to right,#c6c6c6 0 1px,transparent 1px 2px)"></div>
<div class="ab" style="left:9px;top:411px;width:1417px;height:1px;background:repeating-linear-gradient(to right,#c6c6c6 0 1px,transparent 1px 2px)"></div>
<div class="ab" style="left:9px;top:436px;width:1417px;height:1px;background:repeating-linear-gradient(to right,#c6c6c6 0 1px,transparent 1px 2px)"></div>
<div class="ab" style="left:9px;top:461px;width:1417px;height:1px;background:repeating-linear-gradient(to right,#c6c6c6 0 1px,transparent 1px 2px)"></div>
<div class="ab" style="left:9px;top:486px;width:1417px;height:1px;background:repeating-linear-gradient(to right,#c6c6c6 0 1px,transparent 1px 2px)"></div>
<div class="ab" style="left:9px;top:511px;width:1417px;height:1px;background:repeating-linear-gradient(to right,#c6c6c6 0 1px,transparent 1px 2px)"></div>
<div class="ab" style="left:9px;top:536px;width:1417px;height:1px;background:repeating-linear-gradient(to right,#c6c6c6 0 1px,transparent 1px 2px)"></div>
<div class="ab" style="left:9px;top:561px;width:1417px;height:1px;background:repeating-linear-gradient(to right,#c6c6c6 0 1px,transparent 1px 2px)"></div>
<div class="ab" style="left:9px;top:586px;width:1417px;height:1px;background:repeating-linear-gradient(to right,#c6c6c6 0 1px,transparent 1px 2px)"></div>
<div class="ab" style="left:9px;top:611px;width:1417px;height:1px;background:repeating-linear-gradient(to right,#c6c6c6 0 1px,transparent 1px 2px)"></div>
<div class="ab" style="left:9px;top:636px;width:1417px;height:1px;background:repeating-linear-gradient(to right,#c6c6c6 0 1px,transparent 1px 2px)"></div>
<div class="ab" style="left:9px;top:661px;width:1417px;height:1px;background:repeating-linear-gradient(to right,#c6c6c6 0 1px,transparent 1px 2px)"></div>
<div class="ab" style="left:9px;top:686px;width:1417px;height:1px;background:repeating-linear-gradient(to right,#c6c6c6 0 1px,transparent 1px 2px)"></div>
<div class="ab" style="left:9px;top:711px;width:1417px;height:1px;background:repeating-linear-gradient(to right,#c6c6c6 0 1px,transparent 1px 2px)"></div>
<div class="ab" style="left:62px;top:436px;width:1px;height:25px;background:repeating-linear-gradient(to bottom,#e8f4fb 0 1px,#0090da 1px 2px)"></div>
<div class="ab" style="left:181px;top:436px;width:1px;height:25px;background:repeating-linear-gradient(to bottom,#e8f4fb 0 1px,#0090da 1px 2px)"></div>
<div class="ab" style="left:265px;top:436px;width:1px;height:25px;background:repeating-linear-gradient(to bottom,#e8f4fb 0 1px,#0090da 1px 2px)"></div>
<div class="ab" style="left:307px;top:436px;width:1px;height:25px;background:repeating-linear-gradient(to bottom,#e8f4fb 0 1px,#0090da 1px 2px)"></div>
<div class="ab" style="left:367px;top:436px;width:1px;height:25px;background:repeating-linear-gradient(to bottom,#e8f4fb 0 1px,#0090da 1px 2px)"></div>
<div class="ab" style="left:427px;top:436px;width:1px;height:25px;background:repeating-linear-gradient(to bottom,#e8f4fb 0 1px,#0090da 1px 2px)"></div>
<div class="ab" style="left:487px;top:436px;width:1px;height:25px;background:repeating-linear-gradient(to bottom,#e8f4fb 0 1px,#0090da 1px 2px)"></div>
<div class="ab" style="left:559px;top:436px;width:1px;height:25px;background:repeating-linear-gradient(to bottom,#e8f4fb 0 1px,#0090da 1px 2px)"></div>
<div class="ab" style="left:640px;top:436px;width:1px;height:25px;background:repeating-linear-gradient(to bottom,#e8f4fb 0 1px,#0090da 1px 2px)"></div>
<div class="ab" style="left:700px;top:436px;width:1px;height:25px;background:repeating-linear-gradient(to bottom,#e8f4fb 0 1px,#0090da 1px 2px)"></div>
<div class="ab" style="left:760px;top:436px;width:1px;height:25px;background:repeating-linear-gradient(to bottom,#e8f4fb 0 1px,#0090da 1px 2px)"></div>
<div class="ab" style="left:820px;top:436px;width:1px;height:25px;background:repeating-linear-gradient(to bottom,#e8f4fb 0 1px,#0090da 1px 2px)"></div>
<div class="ab" style="left:904px;top:436px;width:1px;height:25px;background:repeating-linear-gradient(to bottom,#e8f4fb 0 1px,#0090da 1px 2px)"></div>
<div class="ab" style="left:992px;top:436px;width:1px;height:25px;background:repeating-linear-gradient(to bottom,#e8f4fb 0 1px,#0090da 1px 2px)"></div>
<div class="ab" style="left:1093px;top:436px;width:1px;height:25px;background:repeating-linear-gradient(to bottom,#e8f4fb 0 1px,#0090da 1px 2px)"></div>
<div class="ab" style="left:1154px;top:436px;width:1px;height:25px;background:repeating-linear-gradient(to bottom,#e8f4fb 0 1px,#0090da 1px 2px)"></div>
<div class="ab" style="left:34px;top:460px;width:1391px;height:1px;background:repeating-linear-gradient(to right,#e8f4fb 0 1px,#0090da 1px 2px)"></div>
<div class="t" style="left:8px;top:343px;width:26px;text-align:center;font-size:12px;color:#000">3</div>
<svg style="left:41px;top:341px" width="15" height="16" viewBox="0 0 15 16"><rect x="0.8" y="0.8" width="13.4" height="14.2" rx="3" fill="#fff" stroke="#8c8c8c" stroke-width="1.6"/></svg>
<div class="t" style="left:186px;top:343px;font-size:12px;color:#000;">H2208261373</div>
<div class="t" style="left:705px;top:342.6px;font-size:12px;color:#000;">票结</div>
<div class="t" style="left:1098px;top:342.6px;font-size:12px;color:#000;">标准</div>
<div class="t" style="left:8px;top:368px;width:26px;text-align:center;font-size:12px;color:#000">4</div>
<svg style="left:41px;top:366px" width="15" height="16" viewBox="0 0 15 16"><rect x="0.8" y="0.8" width="13.4" height="14.2" rx="3" fill="#fff" stroke="#8c8c8c" stroke-width="1.6"/></svg>
<div class="t" style="left:67px;top:368px;font-size:12px;color:#000;">storm202208271203</div>
<div class="t" style="left:186px;top:368px;font-size:12px;color:#000;">H2208266214</div>
<div class="t" style="left:705px;top:367.6px;font-size:12px;color:#000;">票结</div>
<div class="t" style="left:1098px;top:367.6px;font-size:12px;color:#000;">标准</div>
<div class="t" style="left:8px;top:393px;width:26px;text-align:center;font-size:12px;color:#000">5</div>
<svg style="left:41px;top:391px" width="15" height="16" viewBox="0 0 15 16"><rect x="0.8" y="0.8" width="13.4" height="14.2" rx="3" fill="#fff" stroke="#8c8c8c" stroke-width="1.6"/></svg>
<div class="t" style="left:186px;top:393px;font-size:12px;color:#000;">H2209011366</div>
<div class="t" style="left:705px;top:392.6px;font-size:12px;color:#000;">票结</div>
<div class="t" style="left:1098px;top:392.6px;font-size:12px;color:#000;">标准</div>
<div class="t" style="left:8px;top:418px;width:26px;text-align:center;font-size:12px;color:#000">6</div>
<svg style="left:41px;top:416px" width="15" height="16" viewBox="0 0 15 16"><rect x="0.8" y="0.8" width="13.4" height="14.2" rx="3" fill="#fff" stroke="#8c8c8c" stroke-width="1.6"/></svg>
<div class="t" style="left:186px;top:418px;font-size:12px;color:#000;">H2209014154</div>
<div class="t" style="left:705px;top:417.6px;font-size:12px;color:#000;">票结</div>
<div class="t" style="left:1098px;top:417.6px;font-size:12px;color:#000;">标准</div>
<div class="t" style="left:8px;top:443px;width:26px;text-align:center;font-size:12px;color:#000">7</div>
<div class="ab" style="left:41px;top:441px;width:15px;height:15px;border-radius:3px;background:#0b6cff"></div>
<svg style="left:41px;top:441px" width="15" height="15" viewBox="0 0 15 15"><path d="M2.6 7.8l3.5 3.5 6-7.2" fill="none" stroke="#fff" stroke-width="2.3"/></svg>
<div class="t" style="left:186px;top:443px;font-size:12px;color:#fff;-webkit-text-stroke:0.3px #fff">H2209054454</div>
<div class="t" style="left:705px;top:442.6px;font-size:12px;color:#fff;-webkit-text-stroke:0.3px #fff">票结</div>
<div class="t" style="left:1098px;top:442.6px;font-size:12px;color:#fff;-webkit-text-stroke:0.3px #fff">标准</div>
<div class="t" style="left:8px;top:468px;width:26px;text-align:center;font-size:12px;color:#000">8</div>
<svg style="left:41px;top:466px" width="15" height="16" viewBox="0 0 15 16"><rect x="0.8" y="0.8" width="13.4" height="14.2" rx="3" fill="#fff" stroke="#8c8c8c" stroke-width="1.6"/></svg>
<div class="t" style="left:186px;top:468px;font-size:12px;color:#000;">H2209055701</div>
<div class="t" style="left:705px;top:467.6px;font-size:12px;color:#000;">票结</div>
<div class="t" style="left:1098px;top:467.6px;font-size:12px;color:#000;">标准</div>
<div class="t" style="left:909px;top:468px;font-size:12px;color:#000;">48400.00 USD</div>
<div class="t" style="left:8px;top:493px;width:26px;text-align:center;font-size:12px;color:#000">9</div>
<svg style="left:41px;top:491px" width="15" height="16" viewBox="0 0 15 16"><rect x="0.8" y="0.8" width="13.4" height="14.2" rx="3" fill="#fff" stroke="#8c8c8c" stroke-width="1.6"/></svg>
<div class="t" style="left:186px;top:493px;font-size:12px;color:#000;">H2209061531</div>
<div class="t" style="left:705px;top:492.6px;font-size:12px;color:#000;">票结</div>
<div class="t" style="left:1098px;top:492.6px;font-size:12px;color:#000;">标准</div>
<div class="t" style="left:8px;top:518px;width:26px;text-align:center;font-size:12px;color:#000">10</div>
<svg style="left:41px;top:516px" width="15" height="16" viewBox="0 0 15 16"><rect x="0.8" y="0.8" width="13.4" height="14.2" rx="3" fill="#fff" stroke="#8c8c8c" stroke-width="1.6"/></svg>
<div class="t" style="left:186px;top:518px;font-size:12px;color:#000;">H2209061830</div>
<div class="t" style="left:705px;top:517.6px;font-size:12px;color:#000;">票结</div>
<div class="t" style="left:1098px;top:517.6px;font-size:12px;color:#000;">标准</div>
<div class="t" style="left:8px;top:543px;width:26px;text-align:center;font-size:12px;color:#000">11</div>
<svg style="left:41px;top:541px" width="15" height="16" viewBox="0 0 15 16"><rect x="0.8" y="0.8" width="13.4" height="14.2" rx="3" fill="#fff" stroke="#8c8c8c" stroke-width="1.6"/></svg>
<div class="t" style="left:186px;top:543px;font-size:12px;color:#000;">H2209063453</div>
<div class="t" style="left:705px;top:542.6px;font-size:12px;color:#000;">票结</div>
<div class="t" style="left:1098px;top:542.6px;font-size:12px;color:#000;">标准</div>
<div class="t" style="left:8px;top:568px;width:26px;text-align:center;font-size:12px;color:#000">12</div>
<svg style="left:41px;top:566px" width="15" height="16" viewBox="0 0 15 16"><rect x="0.8" y="0.8" width="13.4" height="14.2" rx="3" fill="#fff" stroke="#8c8c8c" stroke-width="1.6"/></svg>
<div class="t" style="left:186px;top:568px;font-size:12px;color:#000;">H2209064493</div>
<div class="t" style="left:705px;top:567.6px;font-size:12px;color:#000;">票结</div>
<div class="t" style="left:1098px;top:567.6px;font-size:12px;color:#000;">标准</div>
<div class="t" style="left:8px;top:593px;width:26px;text-align:center;font-size:12px;color:#000">13</div>
<svg style="left:41px;top:591px" width="15" height="16" viewBox="0 0 15 16"><rect x="0.8" y="0.8" width="13.4" height="14.2" rx="3" fill="#fff" stroke="#8c8c8c" stroke-width="1.6"/></svg>
<div class="t" style="left:186px;top:593px;font-size:12px;color:#000;">H2209067580</div>
<div class="t" style="left:705px;top:592.6px;font-size:12px;color:#000;">票结</div>
<div class="t" style="left:1098px;top:592.6px;font-size:12px;color:#000;">标准</div>
<div class="t" style="left:8px;top:618px;width:26px;text-align:center;font-size:12px;color:#000">14</div>
<svg style="left:41px;top:616px" width="15" height="16" viewBox="0 0 15 16"><rect x="0.8" y="0.8" width="13.4" height="14.2" rx="3" fill="#fff" stroke="#8c8c8c" stroke-width="1.6"/></svg>
<div class="t" style="left:186px;top:618px;font-size:12px;color:#000;">H2209069304</div>
<div class="t" style="left:705px;top:617.6px;font-size:12px;color:#000;">票结</div>
<div class="t" style="left:1098px;top:617.6px;font-size:12px;color:#000;">标准</div>
<div class="t" style="left:8px;top:643px;width:26px;text-align:center;font-size:12px;color:#000">15</div>
<svg style="left:41px;top:641px" width="15" height="16" viewBox="0 0 15 16"><rect x="0.8" y="0.8" width="13.4" height="14.2" rx="3" fill="#fff" stroke="#8c8c8c" stroke-width="1.6"/></svg>
<div class="t" style="left:186px;top:643px;font-size:12px;color:#000;">H2209069514</div>
<div class="t" style="left:705px;top:642.6px;font-size:12px;color:#000;">票结</div>
<div class="t" style="left:1098px;top:642.6px;font-size:12px;color:#000;">标准</div>
<div class="t" style="left:8px;top:668px;width:26px;text-align:center;font-size:12px;color:#000">16</div>
<svg style="left:41px;top:666px" width="15" height="16" viewBox="0 0 15 16"><rect x="0.8" y="0.8" width="13.4" height="14.2" rx="3" fill="#fff" stroke="#8c8c8c" stroke-width="1.6"/></svg>
<div class="t" style="left:186px;top:668px;font-size:12px;color:#000;">H2209076469</div>
<div class="t" style="left:705px;top:667.6px;font-size:12px;color:#000;">票结</div>
<div class="t" style="left:1098px;top:667.6px;font-size:12px;color:#000;">标准</div>
<div class="t" style="left:909px;top:668px;font-size:12px;color:#000;">28000.00 USD</div>
<div class="t" style="left:8px;top:693px;width:26px;text-align:center;font-size:12px;color:#000">17</div>
<svg style="left:41px;top:691px" width="15" height="16" viewBox="0 0 15 16"><rect x="0.8" y="0.8" width="13.4" height="14.2" rx="3" fill="#fff" stroke="#8c8c8c" stroke-width="1.6"/></svg>
<div class="t" style="left:186px;top:693px;font-size:12px;color:#000;">H2209078983</div>
<div class="t" style="left:705px;top:692.6px;font-size:12px;color:#000;">票结</div>
<div class="t" style="left:1098px;top:692.6px;font-size:12px;color:#000;">标准</div>
<div class="ab" style="left:9px;top:712px;width:256px;height:17px;background:#fff"></div>
<div class="ab" style="left:265px;top:712px;width:1178px;height:18px;background:#f0f0f0"></div>
<svg style="left:272px;top:716px" width="5" height="8" viewBox="0 0 5 8"><path d="M5 0v8L0 4z" fill="#505050"/></svg>
<div class="ab" style="left:1023px;top:714px;width:386px;height:13px;background:#c1c1c1"></div>
<svg style="left:1416px;top:716px" width="5" height="8" viewBox="0 0 5 8"><path d="M0 0v8l5-4z" fill="#a3a3a3"/></svg>
<div class="ab" style="left:1426px;top:712px;width:17px;height:18px;background:#dcdcdc"></div>
<div class="ab" style="left:9px;top:729px;width:1435px;height:1px;background:#d0d0d0"></div>
<div class="ab" style="left:1426px;top:336px;width:17px;height:376px;background:#f0f0f0"></div>
<svg style="left:1430px;top:343px" width="9" height="5" viewBox="0 0 9 5"><path d="M0 5h9L4.5 0z" fill="#505050"/></svg>
<div class="ab" style="left:1428px;top:392px;width:13px;height:303px;background:#c1c1c1"></div>
<svg style="left:1430px;top:700px" width="9" height="5" viewBox="0 0 9 5"><path d="M0 0h9L4.5 5z" fill="#a3a3a3"/></svg>
<div class="t" style="left:67px;top:736px;font-size:12px;color:#000;">已选择汇总</div>
<div class="t" style="left:186px;top:737px;font-size:12px;color:#000;">1</div>
<div class="t" style="left:1098px;top:735.6px;font-size:12px;color:#000;">标准</div>
<div class="ab" style="left:9px;top:754px;width:1417px;height:1px;background:repeating-linear-gradient(to right,#c6c6c6 0 1px,transparent 1px 2px)"></div>
<div class="ab" style="left:9px;top:756px;width:1435px;height:1px;background:#d8d8d8"></div>
<div class="ab" style="left:8px;top:757px;width:1436px;height:21px;background:#f7f7f7;border-left:1px solid #d0d0d0;border-right:1px solid #d0d0d0"></div>
<div class="ab" style="left:15px;top:761px;width:50px;height:24px;border:1px solid #b0b0b0;background:#fff"></div>
<div class="t" style="left:22px;top:767px;font-size:13px;color:#000;">20</div>
<svg style="left:50px;top:769px" width="10" height="6" viewBox="0 0 10 6"><path d="M1 1l4 4 4-4" fill="none" stroke="#000" stroke-width="1.8"/></svg>
<div class="ab" style="left:72px;top:760px;width:1px;height:20px;background:#cfcfcf"></div>
<div class="ab" style="left:132px;top:760px;width:1px;height:20px;background:#cfcfcf"></div>
<div class="ab" style="left:225px;top:760px;width:1px;height:20px;background:#cfcfcf"></div>
<div class="ab" style="left:285px;top:760px;width:1px;height:20px;background:#cfcfcf"></div>
<svg style="left:85px;top:767px" width="9" height="10" viewBox="0 0 9 10"><path d="M0.8 0v10" stroke="#777" stroke-width="1.6"/><path d="M8.5 0v10L2.5 5z" fill="#777"/></svg>
<svg style="left:114px;top:767px" width="6" height="10" viewBox="0 0 6 10"><path d="M6 0v10L0 5z" fill="#777"/></svg>
<div class="t" style="left:141px;top:766px;font-size:12px;color:#000;">第</div>
<div class="ab" style="left:155px;top:761px;width:30px;height:22px;border:1px solid #bbb;background:#fff"></div>
<div class="t" style="left:159px;top:766px;font-size:12px;color:#000;">1</div>
<div class="t" style="left:187px;top:766px;font-size:12px;color:#000;">共1页</div>
<svg style="left:239px;top:767px" width="6" height="10" viewBox="0 0 6 10"><path d="M0 0v10l6-5z" fill="#777"/></svg>
<svg style="left:265px;top:767px" width="9" height="10" viewBox="0 0 9 10"><path d="M0.5 0v10L6.5 5z" fill="#777"/><path d="M8.2 0v10" stroke="#777" stroke-width="1.6"/></svg>
<svg style="left:297px;top:766px" width="11" height="12" viewBox="0 0 11 12"><path d="M9.2 4.4A4.3 4.3 0 1 1 5.2 2.2" fill="none" stroke="#444" stroke-width="1.5"/><path d="M4.8 0l3.4 2.2-3.4 2.2z" fill="#444"/></svg>
<div class="t" style="left:1200px;top:765px;width:1237px;font-size:12px;color:#000"></div>
<div class="t" style="right:8px;top:766px;font-size:12px;color:#000">显示1到17,共17记录</div>
<div class="ab" style="left:6px;top:778px;width:1439px;height:39px;background:#f0f2f5"></div>
<svg style="left:1412px;top:437px" width="24" height="25" viewBox="0 0 24 25"><path d="M21 1L3 12.5 21 24" fill="none" stroke="rgba(70,70,70,0.65)" stroke-width="2.8"/></svg>
<div class="ab" style="left:220px;top:166px;width:100px;height:28px;border:3px solid #ff2a2a"></div>
<div class="ab" style="left:1153px;top:329px;width:273px;height:402px;border:3px solid #ff2f2f"></div>
<div class="t" style="left:1239px;top:256px;font-size:21px;color:#ff3333;">传统业务的价表都没</div>
<div class="t" style="left:1239px;top:286px;font-size:21px;color:#ff3333;">显示出来<span style="margin-left:-7px">，</span></div>
<svg style="left:1215px;top:278px" width="35" height="55" viewBox="0 0 35 55"><path d="M27.7 2.6L18.5 34.4 21.8 37 8.2 50 7.1 31.1 11 31.5z" fill="#ff3333"/></svg>
</body></html>
